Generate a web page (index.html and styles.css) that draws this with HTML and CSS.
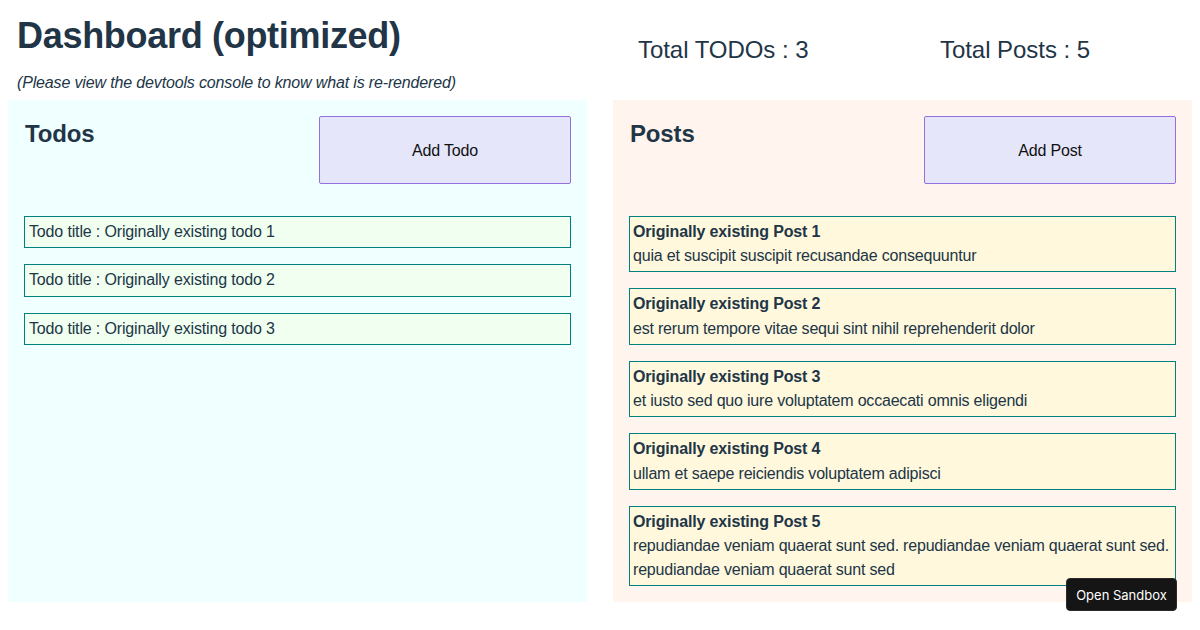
FILE: index.html
```html
<!DOCTYPE html>
<html lang="en">
<head>
<meta charset="utf-8">
<title>Dashboard (optimized)</title>
<link rel="stylesheet" href="styles.css">
</head>
<body>
<header class="header">
  <div class="intro">
    <h1 class="title">Dashboard (optimized)</h1>
    <p class="subtitle">(Please view the devtools console to know what is re-rendered)</p>
  </div>
  <div class="stats">
    <div class="stat">Total TODOs : 3</div>
    <div class="stat">Total Posts : 5</div>
  </div>
</header>
<main class="panels">
  <section class="panel panel-todos">
    <div class="panel-head">
      <h2 class="panel-title">Todos</h2>
      <button class="add-btn" type="button">Add Todo</button>
    </div>
    <ul class="list">
      <li class="todo">Todo title : Originally existing todo 1</li>
      <li class="todo">Todo title : Originally existing todo 2</li>
      <li class="todo">Todo title : Originally existing todo 3</li>
    </ul>
  </section>
  <section class="panel panel-posts">
    <div class="panel-head">
      <h2 class="panel-title">Posts</h2>
      <button class="add-btn" type="button">Add Post</button>
    </div>
    <ul class="list">
      <li class="post"><div class="post-title">Originally existing Post 1</div><div class="post-body">quia et suscipit suscipit recusandae consequuntur</div></li>
      <li class="post"><div class="post-title">Originally existing Post 2</div><div class="post-body">est rerum tempore vitae sequi sint nihil reprehenderit dolor</div></li>
      <li class="post"><div class="post-title">Originally existing Post 3</div><div class="post-body">et iusto sed quo iure voluptatem occaecati omnis eligendi</div></li>
      <li class="post"><div class="post-title">Originally existing Post 4</div><div class="post-body">ullam et saepe reiciendis voluptatem adipisci</div></li>
      <li class="post"><div class="post-title">Originally existing Post 5</div><div class="post-body">repudiandae veniam quaerat sunt sed. repudiandae veniam quaerat sunt sed. repudiandae veniam quaerat sunt sed</div></li>
    </ul>
  </section>
</main>
<a class="sandbox-btn" href="#">Open Sandbox</a>
</body>
</html>
```
FILE: styles.css
```css
html, body {
  margin: 0;
  padding: 0;
}
body {
  margin: 8px;
  font-family: "Liberation Sans", Arial, sans-serif;
  color: #213547;
  background: #fff;
  letter-spacing: -0.15px;
}
.header {
  display: grid;
  grid-template-columns: 579px 579px;
  column-gap: 26px;
}
.title {
  margin: 8px 0 0 9px;
  font-size: 36px;
  font-weight: 700;
  line-height: 40px;
  letter-spacing: -0.3px;
}
.subtitle {
  margin: 18px 0 8px 9px;
  font-size: 16px;
  font-style: italic;
  line-height: 18px;
}
.stats {
  display: flex;
  padding-top: 28px;
}
.stat {
  flex: 0 0 302px;
  width: 302px;
  padding-left: 25px;
  box-sizing: border-box;
  font-size: 24px;
  line-height: 28px;
  letter-spacing: -0.05px;
}
.panels {
  display: grid;
  grid-template-columns: 579px 579px;
  column-gap: 26px;
}
.panel {
  padding: 16px;
}
.panel-todos { background: #f0ffff; }
.panel-posts { background: #fff5ee; }
.panel-head {
  display: flex;
  justify-content: space-between;
  align-items: flex-start;
}
.panel-title {
  margin: 4px 0 0 1px;
  font-size: 24px;
  font-weight: 700;
  line-height: 28px;
}
.add-btn {
  width: 252px;
  height: 68px;
  background: #e6e6fa;
  border: 1px solid #9370db;
  border-radius: 2px;
  font-family: "Liberation Sans", Arial, sans-serif;
  font-size: 16px;
  letter-spacing: -0.15px;
  color: #111;
  padding: 2px 0 0;
}
.list {
  list-style: none;
  margin: 32px 0 0;
  padding: 0;
  display: flex;
  flex-direction: column;
  gap: 16px;
}
.todo {
  background: #f0fff0;
  border: 1px solid #008080;
  padding: 6px 4px;
  font-size: 16px;
  line-height: 18.4px;
}
.post {
  background: #fff8dc;
  border: 1px solid #008080;
  padding: 6px 0 3px 3px;
  font-size: 16px;
}
.post-title {
  font-weight: 700;
  line-height: 18.4px;
  margin-bottom: 3px;
}
.post-body {
  line-height: 24px;
  letter-spacing: -0.2px;
}
.sandbox-btn {
  position: fixed;
  right: 23px;
  bottom: 19px;
  width: 111px;
  height: 33px;
  box-sizing: border-box;
  display: flex;
  align-items: center;
  justify-content: center;
  background: #151515;
  color: #fff;
  border: 1px solid #2a2a2a;
  border-radius: 4px;
  font-family: Inter, "Liberation Sans", sans-serif;
  font-size: 13px;
  letter-spacing: 0;
  text-decoration: none;
}
```
